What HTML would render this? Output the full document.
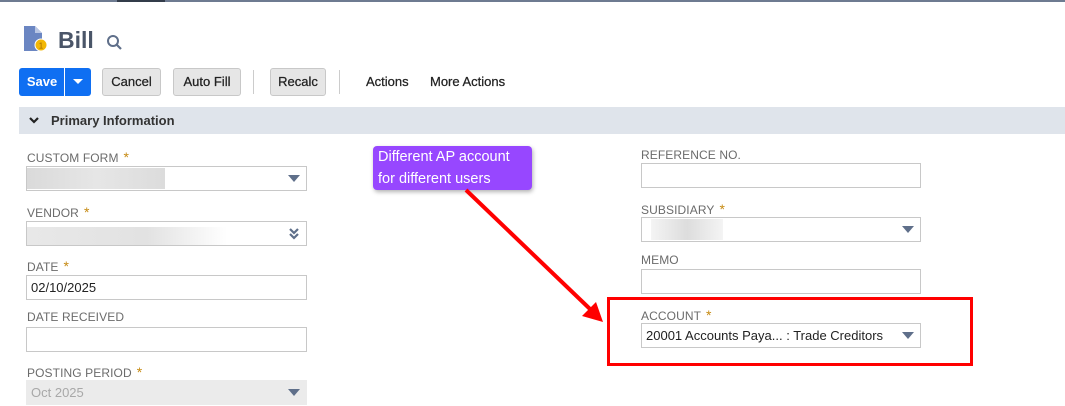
<!DOCTYPE html>
<html><head><meta charset="utf-8">
<style>
*{box-sizing:border-box;margin:0;padding:0}
body{width:1065px;height:406px;overflow:hidden;background:#fff;font-family:"Liberation Sans",Arial,sans-serif;position:relative;color:#333}
.abs{position:absolute}
.btn{position:absolute;top:68px;height:28px;border:1px solid #c8c8c8;background:#e6e6e6;border-radius:3px;font-size:13px;color:#222;line-height:26px;text-align:center;-webkit-text-stroke:0.25px #222}
.sep{position:absolute;top:70px;width:1px;height:24px;background:#ccc}
.lbl{position:absolute;font-size:12px;color:#6b6b6b;letter-spacing:.1px}
.lbl b{color:#c68a12;font-weight:normal;margin-left:5px;font-size:14px}
.inp{position:absolute;border:1px solid #c8c8c8;background:#fff;height:25px;font-size:13px;line-height:23px;padding-left:4px;color:#222}
.tri{position:absolute;right:6px;top:8px;width:0;height:0;border-left:6px solid transparent;border-right:6px solid transparent;border-top:7px solid #5f6f8a}
.blur{position:absolute;top:1px;height:21px;background:linear-gradient(90deg,#ddd,#e9e9e9 70%,#f7f7f7)}
</style></head><body>
<div class="abs" style="left:0;top:0;width:1065px;height:2px;background:#6e7b91"></div>
<div class="abs" style="left:117px;top:0;width:48px;height:2px;background:#333c4a"></div>

<svg class="abs" style="left:22px;top:25px" width="28" height="28" viewBox="0 0 28 28">
<path d="M2 1h11l7 7v18H2z" fill="#6b86c2"/><path d="M13 1v7h7z" fill="#b9c6e3"/>
<circle cx="19" cy="20" r="6" fill="#f2b705" stroke="#fff" stroke-width="1"/>
<text x="19" y="23.5" font-size="8" text-anchor="middle" fill="#a06800" font-family="Liberation Sans">1</text>
</svg>
<div class="abs" style="left:58px;top:27px;font-size:23px;font-weight:bold;color:#4a5568">Bill</div>
<svg class="abs" style="left:106px;top:34px" width="17" height="17" viewBox="0 0 17 17"><circle cx="7" cy="7" r="5" fill="none" stroke="#5f6f8a" stroke-width="2"/><path d="M10.5 10.5L15 15" stroke="#5f6f8a" stroke-width="2.2"/></svg>

<div class="abs" style="left:19px;top:68px;width:72px;height:28px;background:#0f6ff2;border-radius:3px"></div>
<div class="abs" style="left:19px;top:68px;width:46px;height:28px;color:#fff;font-size:13px;font-weight:bold;line-height:28px;text-align:center">Save</div>
<div class="abs" style="left:64px;top:68px;width:1px;height:28px;background:#fff"></div>
<div class="abs" style="left:73px;top:79px;width:0;height:0;border-left:5px solid transparent;border-right:5px solid transparent;border-top:5px solid #fff"></div>
<div class="btn" style="left:102px;width:59px">Cancel</div>
<div class="btn" style="left:173px;width:68px">Auto Fill</div>
<div class="sep" style="left:253px"></div>
<div class="btn" style="left:270px;width:56px">Recalc</div>
<div class="sep" style="left:339px"></div>
<div class="abs" style="left:366px;top:74px;font-size:13px;color:#222;-webkit-text-stroke:0.25px #222">Actions</div>
<div class="abs" style="left:430px;top:74px;font-size:13px;color:#222;-webkit-text-stroke:0.25px #222">More Actions</div>

<div class="abs" style="left:19px;top:107px;width:1046px;height:27px;background:#dfe4eb"></div>
<svg class="abs" style="left:28px;top:115px" width="12" height="10" viewBox="0 0 12 10"><path d="M2 3l4 4 4-4" fill="none" stroke="#222" stroke-width="2.2"/></svg>
<div class="abs" style="left:51px;top:113px;font-size:13px;font-weight:bold;color:#333">Primary Information</div>

<div class="lbl" style="left:27px;top:149px">CUSTOM FORM<b>*</b></div>
<div class="inp" style="left:26px;top:166px;width:281px"><div class="blur" style="left:0;width:138px;background:linear-gradient(90deg,#dadada,#e6e6e6,#dcdcdc)"></div><div class="tri"></div></div>
<div class="lbl" style="left:27px;top:204px">VENDOR<b>*</b></div>
<div class="inp" style="left:26px;top:221px;width:281px"><div class="blur" style="left:0;width:200px;top:5px;height:18px;background:linear-gradient(90deg,#e8e8e8,#e2e2e2 60%,#fff)"></div>
<svg class="abs" style="right:6px;top:5px" width="12" height="14" viewBox="0 0 12 14"><path d="M2 2l4 4 4-4M2 7l4 4 4-4" fill="none" stroke="#5f6f8a" stroke-width="2.2"/></svg></div>
<div class="lbl" style="left:27px;top:258px">DATE<b>*</b></div>
<div class="inp" style="left:26px;top:275px;width:281px">02/10/2025</div>
<div class="lbl" style="left:27px;top:310px">DATE RECEIVED</div>
<div class="inp" style="left:26px;top:327px;width:281px"></div>
<div class="lbl" style="left:27px;top:364px">POSTING PERIOD<b>*</b></div>
<div class="inp" style="left:26px;top:380px;width:281px;background:#ebebeb;border-color:#ebebeb;color:#a8a8a8">Oct 2025<div class="tri"></div></div>

<div class="lbl" style="left:641px;top:148px">REFERENCE NO.</div>
<div class="inp" style="left:641px;top:163px;width:280px"></div>
<div class="lbl" style="left:641px;top:201px">SUBSIDIARY<b>*</b></div>
<div class="inp" style="left:641px;top:217px;width:280px"><div class="blur" style="left:9px;width:72px;background:linear-gradient(90deg,#f4f4f4,#ddd 50%,#f4f4f4)"></div><div class="tri"></div></div>
<div class="lbl" style="left:641px;top:253px">MEMO</div>
<div class="inp" style="left:641px;top:269px;width:280px"></div>
<div class="lbl" style="left:641px;top:307px">ACCOUNT<b>*</b></div>
<div class="inp" style="left:641px;top:323px;width:280px;color:#222">20001 Accounts Paya... : Trade Creditors<div class="tri"></div></div>

<div class="abs" style="left:607px;top:297px;width:366px;height:69px;border:3px solid #f00"></div>

<div class="abs" style="left:373px;top:146px;width:159px;height:44px;background:#9747ff;border-radius:4px;box-shadow:1px 2px 4px rgba(0,0,0,.3);color:#fff;font-size:14.5px;line-height:22px;padding-left:5px">Different AP account<br>for different users</div>

<svg class="abs" style="left:0;top:0" width="1065" height="406"><line x1="466" y1="190" x2="590" y2="309" stroke="#f00" stroke-width="4"/><path d="M603 322L582 316L596 302Z" fill="#f00"/></svg>
</body></html>
